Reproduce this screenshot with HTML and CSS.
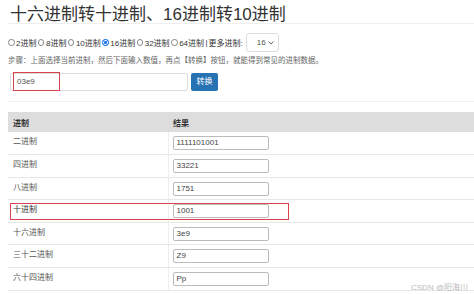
FILE: index.html
```html
<!doctype html>
<html>

<head>
    <meta charset="utf-8" />
    <title>进制转换</title>
    <link rel="stylesheet" href="styles.css">
</head>

<body>
    <div id="wrap">
        <h1 class="title">十六进制转十进制、16进制转10进制</h1>

        <div class="radix-bar">
            <label><span class="radio"></span>2进制</label>
            <label><span class="radio"></span>8进制</label>
            <label><span class="radio"></span>10进制</label>
            <label><span class="radio checked"></span>16进制</label>
            <label><span class="radio"></span>32进制</label>
            <label><span class="radio"></span>64进制</label>
            <span class="sep">|</span>
            <span class="more">更多进制:</span>
            <div class="select-box">
                <span>16</span>
                <svg width="6" height="4" viewBox="0 0 6 4"><path d="M0.5 0.5 L3 3 L5.5 0.5" fill="none" stroke="#666" stroke-width="1"/></svg>
            </div>
        </div>

        <p class="tip">步骤：上面选择当前进制，然后下面输入数值，再点【转换】按钮，就能得到常见的进制数据。</p>

        <div class="input-row">
            <div class="src-input">03e9</div>
            <div class="btn">转换</div>
            <!-- 截图上的红框标注 -->
            <span class="mark mark-input"></span>
        </div>

        <div class="line"></div>

        <div class="table-wrap">
            <table class="result">
                <thead>
                    <tr>
                        <th class="col1">进制</th>
                        <th>结果</th>
                    </tr>
                </thead>
                <tbody>
                    <tr><td class="col1">二进制</td><td><div class="val">1111101001</div></td></tr>
                    <tr><td class="col1">四进制</td><td><div class="val">33221</div></td></tr>
                    <tr><td class="col1">八进制</td><td><div class="val">1751</div></td></tr>
                    <tr><td class="col1 dark">十进制</td><td><div class="val">1001</div></td></tr>
                    <tr><td class="col1">十六进制</td><td><div class="val">3e9</div></td></tr>
                    <tr><td class="col1">三十二进制</td><td><div class="val">Z9</div></td></tr>
                    <tr><td class="col1">六十四进制</td><td><div class="val">Pp</div></td></tr>
                </tbody>
            </table>
            <span class="mark mark-row"></span>
        </div>

        <div class="watermark">CSDN @阳海川</div>
    </div>
</body>

</html>
```

FILE: styles.css
```css
* {
    margin: 0;
    padding: 0;
    box-sizing: border-box;
}

html,
body {
    height: 100%;
    overflow: hidden;
    background: #fff;
}

body {
    font-family: "Liberation Sans", "Noto Sans CJK SC", sans-serif;
    color: #333;
}

#wrap {
    position: relative;
    height: 100%;
    padding-left: 8px;
}

/* 标题 */
.title {
    font-size: 17px;
    font-weight: normal;
    line-height: 22px;
    height: 24px;
    padding: 4px 0 0 2px;
    border-bottom: 1px solid #eee;
    color: #333;
}

/* 进制单选 */
.radix-bar {
    display: flex;
    align-items: center;
    height: 19px;
    margin-top: 9px;
    font-size: 8px;
    color: #333;
}

.radix-bar label {
    display: flex;
    align-items: center;
    margin-right: 1.5px;
}

.radix-bar .radio {
    width: 6.5px;
    height: 6.5px;
    border: 1px solid #888;
    border-radius: 50%;
    margin-right: 1.5px;
}

.radix-bar .radio.checked {
    border-color: #1a73e8;
    background: #1a73e8;
    box-shadow: inset 0 0 0 1px #fff;
}

.radix-bar .sep {
    margin: 0 1px 0 0;
}

.select-box {
    display: flex;
    align-items: center;
    justify-content: space-between;
    width: 33px;
    height: 19px;
    margin-left: 3px;
    padding: 0 4px 0 10px;
    border: 1px solid #ddd;
    border-radius: 3px;
    font-size: 8px;
    color: #555;
}

/* 说明 */
.tip {
    margin-top: 3px;
    font-size: 7.5px;
    line-height: 12px;
    color: #666;
}

/* 输入 */
.input-row {
    position: relative;
    display: flex;
    margin-top: 6px;
    height: 18px;
}

.src-input {
    width: 178px;
    height: 18px;
    margin-left: 2px;
    padding-left: 6px;
    border: 1px solid #ddd;
    border-radius: 2px;
    font-size: 8px;
    line-height: 16px;
    color: #555;
}

.btn {
    width: 27px;
    height: 18px;
    margin-left: 3px;
    background: #2672b3;
    border-radius: 2px;
    color: #fff;
    font-size: 8px;
    line-height: 18px;
    text-align: center;
}

.mark {
    position: absolute;
    border: 1px solid #d9434f;
}

.mark-input {
    left: 5px;
    top: -1px;
    width: 47px;
    height: 19px;
}

.line {
    height: 1px;
    margin-top: 10px;
    background: #eee;
}

/* 结果表格 */
.table-wrap {
    position: relative;
    margin-top: 10px;
}

.result {
    width: 466px;
    border-collapse: collapse;
    font-size: 8px;
    color: #555;
}

.result th {
    height: 20px;
    background: #ddd;
    text-align: left;
    padding-left: 5px;
    color: #333;
    font-weight: bold;
}

.result th.col1,
.result td.col1 {
    width: 160px;
}

.result td {
    height: 22.6px;
    border-bottom: 1px solid #e6e6e6;
    vertical-align: top;
    padding: 3px 0 0 5px;
}

.result td.col1 {
    border-right: 1px solid #eee;
}

.result td.dark {
    color: #333;
}

.result .val {
    width: 96px;
    height: 14px;
    margin: 1px 0 0 -1px;
    padding-left: 3px;
    border: 1px solid #bbb;
    border-radius: 2px;
    line-height: 12px;
    color: #444;
}

.mark-row {
    left: 2px;
    top: 91px;
    width: 279px;
    height: 17px;
}

.watermark {
    position: absolute;
    right: 6px;
    bottom: 2px;
    font-size: 8px;
    color: #bbb;
}
```
